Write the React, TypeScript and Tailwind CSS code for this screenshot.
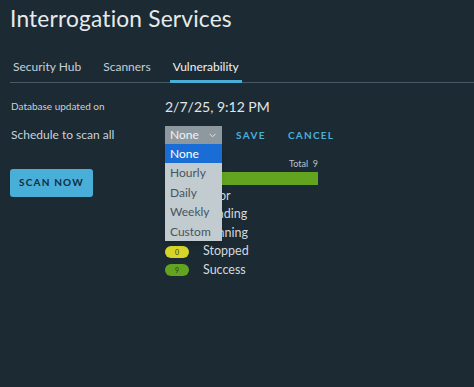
import React from 'react';

const options = ['None', 'Hourly', 'Daily', 'Weekly', 'Custom'];

const legend = [
  { label: 'Error', count: 0, color: 'bg-[#e12200]' },
  { label: 'Pending', count: 0, color: 'bg-[#8c9ba5]' },
  { label: 'Running', count: 0, color: 'bg-[#49afd9]' },
  { label: 'Stopped', count: 0, color: 'bg-[#d7d42a]' },
  { label: 'Success', count: 9, color: 'bg-[#62a420]' },
];

export default function App() {
  return (
    <div
      className="w-[474px] h-[387px] bg-[#1c2a34] text-[#dbe1e5] overflow-hidden"
      style={{ fontFamily: 'Lato, "Noto Sans", sans-serif' }}
    >
      <div className="px-[10px] pt-[5px]">
        <h1 className="text-[22.7px] leading-[28px] text-[#e6eaed] tracking-[0.2px]">Interrogation Services</h1>

        {/* tabs */}
        <div className="mt-[25px] flex border-b border-[#4a5a64] w-[464px]">
          <div className="px-[3px] pb-[6px] text-[12px] text-[#c6d0d6]">Security Hub</div>
          <div className="ml-[16px] px-[3px] pb-[6px] text-[12px] text-[#c6d0d6]">Scanners</div>
          <div className="ml-[16px] px-[3px] pb-[4px] text-[12px] text-[#eef2f4] border-b-[3px] border-[#49afd9] -mb-px">
            Vulnerability
          </div>
        </div>

        {/* details */}
        <div className="mt-[13px] grid grid-cols-[155px_1fr] items-center">
          <div className="text-[10px] text-[#c9d2d8] pl-px">Database updated on</div>
          <div className="text-[14px] text-[#e0e5e8]">2/7/25, 9:12 PM</div>
        </div>

        <div className="mt-[9px] grid grid-cols-[155px_1fr] items-center">
          <div className="text-[12px] text-[#c9d2d8] pl-px">Schedule to scan all</div>
          <div className="relative flex items-center">
            <div className="w-[57px] h-[18px] bg-[#8e999f] flex items-center justify-between pl-[5px] pr-[6px] text-[12px] text-[#f1f3f5]">
              <span>None</span>
              <svg width="7" height="5" viewBox="0 0 7 5" fill="none" stroke="#dfe4e7" strokeWidth="1">
                <path d="M0.5 0.8 L3.5 3.8 L6.5 0.8" />
              </svg>
            </div>
            <button className="ml-[14px] text-[10px] font-bold tracking-[1.4px] text-[#49afd9]">SAVE</button>
            <button className="ml-[22px] text-[10px] font-bold tracking-[1.2px] text-[#49afd9]">CANCEL</button>

            {/* open dropdown */}
            <div className="absolute left-0 top-[18px] z-10 w-[57px] bg-[#c2cbd0] shadow-md">
              {options.map((o, i) => (
                <div
                  key={o}
                  className={
                    i === 0
                      ? 'h-[19px] leading-[19px] pl-[5px] text-[12px] bg-[#1b6dd6] text-white'
                      : 'h-[19.5px] leading-[19.5px] pl-[5px] text-[12px] text-[#47555e]'
                  }
                >
                  {o}
                </div>
              ))}
            </div>
          </div>
        </div>

        <div className="mt-[14px] grid grid-cols-[155px_1fr]">
          <div className="pt-[10px]">
            <button className="h-[28px] w-[83px] rounded-[3px] bg-[#49afd9] text-[10px] font-bold tracking-[1.2px] text-[#0f2d40]">
              SCAN NOW
            </button>
          </div>
          <div className="w-[153px]">
            <div className="text-right text-[9px] text-[#b9c4cb] leading-[12px]">Total&nbsp; 9</div>
            <div className="mt-[2px] h-[13px] bg-[#62a420]" />
            <div className="mt-[2px] flex flex-col">
              {legend.map((l) => (
                <div key={l.label} className="h-[18.5px] flex items-center">
                  <div
                    className={`w-[24px] h-[12px] rounded-full ${l.color} flex items-center justify-center text-[7px] text-[#2c3a20]`}
                  >
                    {l.count}
                  </div>
                  <span className="ml-[14px] text-[12.5px] text-[#d2d9de]">{l.label}</span>
                </div>
              ))}
            </div>
          </div>
        </div>
      </div>
    </div>
  );
}
